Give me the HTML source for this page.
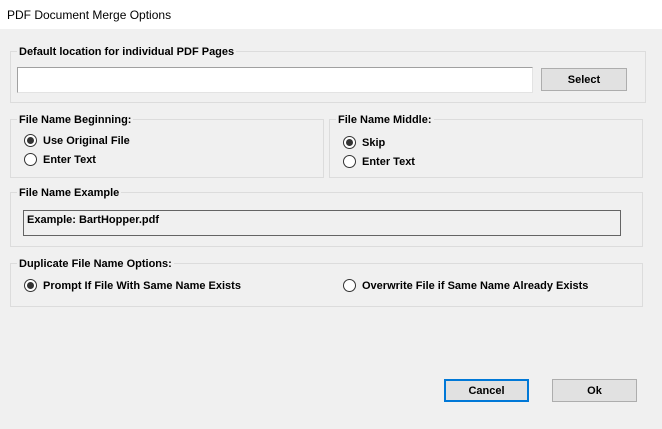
<!DOCTYPE html>
<html><head><style>
*{margin:0;padding:0;box-sizing:border-box}
body{width:662px;height:429px;background:#f0f0f0;position:relative;overflow:hidden;font-family:"Liberation Sans",Arial,sans-serif;font-size:11px;font-weight:bold;color:#000}
.t{position:absolute;left:0;top:0;width:662px;height:29px;background:#fff}
.t span{position:absolute;left:7px;top:8px;font-size:12px;font-weight:normal;color:#000}
.g{position:absolute;border:1px solid #dcdcdc}
.l{position:absolute;background:#f0f0f0;padding:0 2px;white-space:nowrap}
.a{position:absolute;white-space:nowrap}
.r{position:absolute;width:13px;height:13px;border:1px solid #333;border-radius:50%;background:#fff}
.r.on::after{content:"";position:absolute;left:2px;top:2px;width:7px;height:7px;border-radius:50%;background:#333}
.b{position:absolute;border:1px solid #adadad;background:#e1e1e1;text-align:center}
</style></head><body>
<div class="t"><span>PDF Document Merge Options</span></div>

<div class="g" style="left:10px;top:51px;width:636px;height:52px"></div>
<div class="l" style="left:17px;top:46px">Default location for individual PDF Pages</div>
<div style="position:absolute;left:17px;top:67px;width:516px;height:26px;background:#fff;border:1px solid #a0a0a0;border-right-color:#e3e3e3;border-bottom-color:#e3e3e3"></div>
<div class="b" style="left:541px;top:68px;width:86px;height:23px;line-height:23px">Select</div>

<div class="g" style="left:10px;top:119px;width:314px;height:59px"></div>
<div class="l" style="left:17px;top:114px">File Name Beginning:</div>
<div class="r on" style="left:24px;top:134px"></div><div class="a" style="left:43px;top:135px">Use Original File</div>
<div class="r" style="left:24px;top:153px"></div><div class="a" style="left:43px;top:154px">Enter Text</div>

<div class="g" style="left:329px;top:119px;width:314px;height:59px"></div>
<div class="l" style="left:336px;top:114px">File Name Middle:</div>
<div class="r on" style="left:343px;top:136px"></div><div class="a" style="left:362px;top:137px">Skip</div>
<div class="r" style="left:343px;top:155px"></div><div class="a" style="left:362px;top:156px">Enter Text</div>

<div class="g" style="left:10px;top:192px;width:633px;height:55px"></div>
<div class="l" style="left:17px;top:187px">File Name Example</div>
<div style="position:absolute;left:23px;top:210px;width:598px;height:26px;border:1px solid #646464"></div>
<div class="a" style="left:27px;top:214px">Example: BartHopper.pdf</div>

<div class="g" style="left:10px;top:263px;width:633px;height:44px"></div>
<div class="l" style="left:17px;top:258px">Duplicate File Name Options:</div>
<div class="r on" style="left:24px;top:279px"></div><div class="a" style="left:43px;top:280px">Prompt If File With Same Name Exists</div>
<div class="r" style="left:343px;top:279px"></div><div class="a" style="left:362px;top:280px">Overwrite File if Same Name Already Exists</div>

<div class="b" style="left:444px;top:379px;width:85px;height:23px;line-height:21px;border:2px solid #0078d7">Cancel</div>
<div class="b" style="left:552px;top:379px;width:85px;height:23px;line-height:23px">Ok</div>
</body></html>
